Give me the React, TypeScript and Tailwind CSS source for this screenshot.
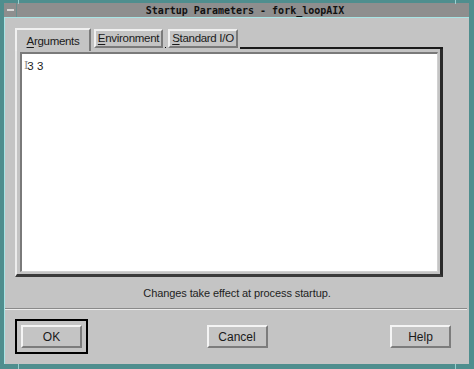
import React from 'react';

const sans = { fontFamily: '"Liberation Sans", Arial, sans-serif' };

const MotifButton: React.FC<{ label: string }> = ({ label }) => (
  <div className="w-[61px] h-[23px] flex items-center justify-center bg-[#c4c4c4] border-t-2 border-l-2 border-t-[#f4f4f4] border-l-[#f4f4f4] border-b-2 border-r-2 border-b-[#7c7c7c] border-r-[#7c7c7c] text-[12px] text-[#1a1a1a]">
    {label}
  </div>
);

const Tab: React.FC<{ first: string; rest: string; active?: boolean; width: string }> = ({ first, rest, active, width }) => {
  if (active) {
    return (
      <div className={`${width} h-[23px] relative z-10 -mb-[2px] flex items-center justify-center bg-[#c4c4c4] border-t-2 border-l-2 border-t-[#f0f0f0] border-l-[#f0f0f0] border-r-2 border-r-[#7a7a7a] text-[11.5px] text-[#1a1a1a] tracking-[-0.3px] pt-[2px]`}>
        <span><span className="underline underline-offset-2">{first}</span>{rest}</span>
      </div>
    );
  }
  return (
    <div className={`${width} h-[19px] mb-[1px] flex items-center justify-center bg-[#c4c4c4] border-t-2 border-l-2 border-t-[#f0f0f0] border-l-[#f0f0f0] border-r-2 border-b-2 border-r-[#7a7a7a] border-b-[#7a7a7a] text-[11.5px] text-[#1a1a1a] tracking-[-0.3px]`}>
      <span><span className="underline underline-offset-2">{first}</span>{rest}</span>
    </div>
  );
};

const App: React.FC = () => {
  return (
    <div className="w-[474px] h-[369px] bg-[#4f8e8e] relative flex flex-col pt-[3px] pl-[4px] pr-[5px] pb-[5px]" style={sans}>
      {/* frame resize marks */}
      <div className="absolute left-[18px] top-0 w-px h-[4px] bg-[#9ad0d0]" />
      <div className="absolute left-[455px] top-0 w-px h-[4px] bg-[#9ad0d0]" />
      <div className="absolute left-[18px] bottom-0 w-px h-[5px] bg-[#9ad0d0]" />
      <div className="absolute left-[455px] bottom-0 w-px h-[5px] bg-[#9ad0d0]" />

      {/* title bar */}
      <div className="h-[15px] flex items-stretch bg-[#8e8e8e] border-b border-b-[#a8e4e4]">
        <div className="w-[13px] flex items-center justify-center border-r border-r-[#6a8e8e]">
          <div className="w-[7px] h-[2px] bg-[#d8d8d8]" />
        </div>
        <div className="flex-1 flex items-center justify-center text-[10px] font-bold text-[#111] pl-[4px]" style={{ fontFamily: '"DejaVu Sans Mono", "Liberation Mono", monospace' }}>
          Startup Parameters - fork_loopAIX
        </div>
      </div>

      {/* body */}
      <div className="flex-1 bg-[#c4c4c4] border-l border-l-[#a8e4e4] flex flex-col">
        <div className="pl-[10px] pr-[26px] pt-[10px]">
          <div className="flex items-end">
            <Tab first="A" rest="rguments" active width="w-[76px]" />
            <div className="w-[3px]" />
            <Tab first="E" rest="nvironment" width="w-[69px]" />
            <div className="w-[5px] flex items-end pb-[1px]"><div className="w-px h-px bg-black ml-[2px]" /></div>
            <Tab first="S" rest="tandard I/O" width="w-[70px]" />
            <div className="flex-1 h-[2px] bg-[#1a1a1a] ml-[2px]" />
          </div>
          <div className="h-[228px] border-l-2 border-l-[#ececec] border-r-[3px] border-r-[#2a2a2a] border-b-[3px] border-b-[#3a3a3a] p-[3px] pr-[2px] pb-[2px]">
            <div className="h-full bg-white border-t-2 border-l-2 border-t-[#7a7a7a] border-l-[#7a7a7a] border-b border-r border-b-[#d0d0d0] border-r-[#d0d0d0] pl-[2px] pt-[5px]">
              <div className="flex items-center text-[11.5px] text-[#1a1a1a] leading-[14px]">
                <span className="text-[#888] text-[11px] mr-[-1px]" style={{ fontFamily: '"DejaVu Serif", serif' }}>I</span>
                <span>3 3</span>
              </div>
            </div>
          </div>
        </div>
        <div className="text-center text-[11px] text-[#1e1e1e] mt-[10px] tracking-[-0.1px] leading-[13px]">
          Changes take effect at process startup.
        </div>
        <div className="mt-[8px] border-t border-t-[#8a8a8a] border-b border-b-[#ececec] mr-[2px]" />
        <div className="flex items-center pl-[10px] pr-[18px] pt-[9px]">
          <div className="border-2 border-black p-[4px]">
            <MotifButton label="OK" />
          </div>
          <div className="flex-1 flex justify-center pr-[4px]">
            <MotifButton label="Cancel" />
          </div>
          <div>
            <MotifButton label="Help" />
          </div>
        </div>
      </div>
    </div>
  );
};

export default App;
